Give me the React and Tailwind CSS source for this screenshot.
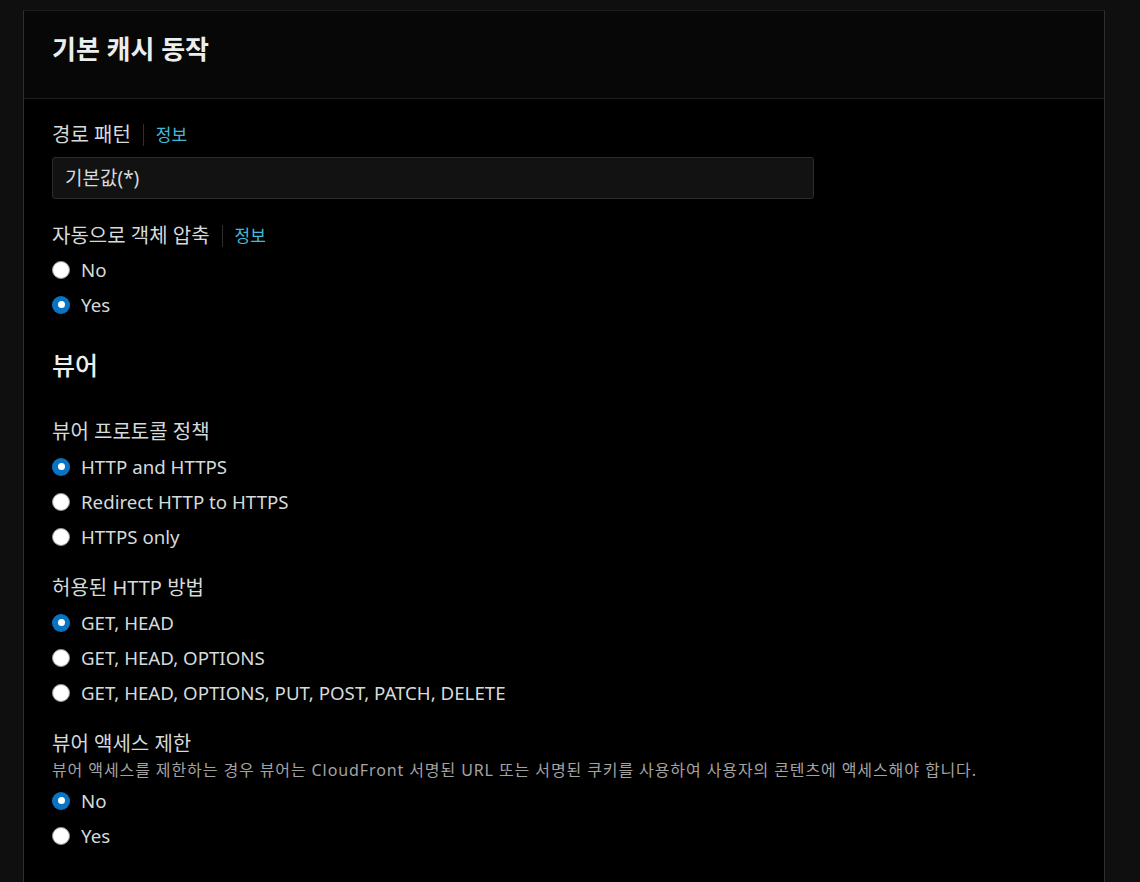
import { useState } from "react";

const font = { fontFamily: '"Noto Sans", "Noto Sans CJK KR", sans-serif' };

function Radio({ label, checked, onChange }) {
  return (
    <label className="flex h-[35px] items-center cursor-pointer" onClick={onChange}>
      {checked ? (
        <span className="flex h-[18px] w-[18px] items-center justify-center rounded-full bg-[#0a74c4]">
          <span className="h-[7px] w-[7px] rounded-full bg-white" />
        </span>
      ) : (
        <span className="h-[18px] w-[18px] rounded-full border border-[#8d9696] bg-white" />
      )}
      <span className="ml-[11px] text-[18.7px] leading-6 text-[#d5dbdb]">{label}</span>
    </label>
  );
}

function RadioGroup({ options, initial }) {
  const [value, setValue] = useState(initial);
  return (
    <div className="flex flex-col">
      {options.map((o) => (
        <Radio key={o} label={o} checked={value === o} onChange={() => setValue(o)} />
      ))}
    </div>
  );
}

function Label({ children, info }) {
  return (
    <div className="flex items-center h-6">
      <span className="text-[20px] leading-6 text-[#d5dbdb]">{children}</span>
      {info && (
        <>
          <span className="mx-[12px] h-[22px] w-px bg-[#2f2f2f]" />
          <a href="#" className="text-[17px] leading-6 text-[#44b9d6]">
            정보
          </a>
        </>
      )}
    </div>
  );
}

export default function App() {
  return (
    <div className="min-h-[882px] bg-[#0f0f0f] pt-[10px] overflow-hidden" style={font}>
      <div className="ml-[23px] w-[1082px] min-h-[900px] border-t border-x border-t-[#1c1c1c] border-x-[#2e2e2e] bg-black">
        <div className="h-[88px] border-b border-[#1f1f1f] bg-[#070707] px-[28px] pt-[22px]">
          <h2 className="text-[26px] font-bold leading-8 text-[#eceeee]">기본 캐시 동작</h2>
        </div>

        <div className="px-[28px] pt-[24px]">
          <Label info>경로 패턴</Label>
          <div className="mt-[10px] flex h-[42px] w-[762px] items-center rounded-[3px] border border-[#2c2c2c] bg-[#121212] px-[12px]">
            <span className="text-[19px] text-[#d5dbdb]">기본값(*)</span>
          </div>

          <div className="mt-[25px]">
            <Label info>자동으로 객체 압축</Label>
          </div>
          <div className="mt-[4px]">
            <RadioGroup options={["No", "Yes"]} initial="Yes" />
          </div>

          <h3 className="mt-[27px] text-[25px] font-medium leading-8 text-[#eceeee]">뷰어</h3>

          <div className="mt-[39px]">
            <Label>뷰어 프로토콜 정책</Label>
          </div>
          <div className="mt-[5px]">
            <RadioGroup
              options={["HTTP and HTTPS", "Redirect HTTP to HTTPS", "HTTPS only"]}
              initial="HTTP and HTTPS"
            />
          </div>

          <div className="mt-[22px]">
            <Label>허용된 HTTP 방법</Label>
          </div>
          <div className="mt-[5px]">
            <RadioGroup
              options={[
                "GET, HEAD",
                "GET, HEAD, OPTIONS",
                "GET, HEAD, OPTIONS, PUT, POST, PATCH, DELETE",
              ]}
              initial="GET, HEAD"
            />
          </div>

          <div className="mt-[22px]">
            <Label>뷰어 액세스 제한</Label>
          </div>
          <p className="mt-[3px] text-[16px] leading-[22px] tracking-[0.9px] text-[#a3a3a3]">
            뷰어 액세스를 제한하는 경우 뷰어는 CloudFront 서명된 URL 또는 서명된 쿠키를 사용하여 사용자의 콘텐츠에 액세스해야 합니다.
          </p>
          <div className="mt-[2px]">
            <RadioGroup options={["No", "Yes"]} initial="No" />
          </div>
        </div>
      </div>
    </div>
  );
}
